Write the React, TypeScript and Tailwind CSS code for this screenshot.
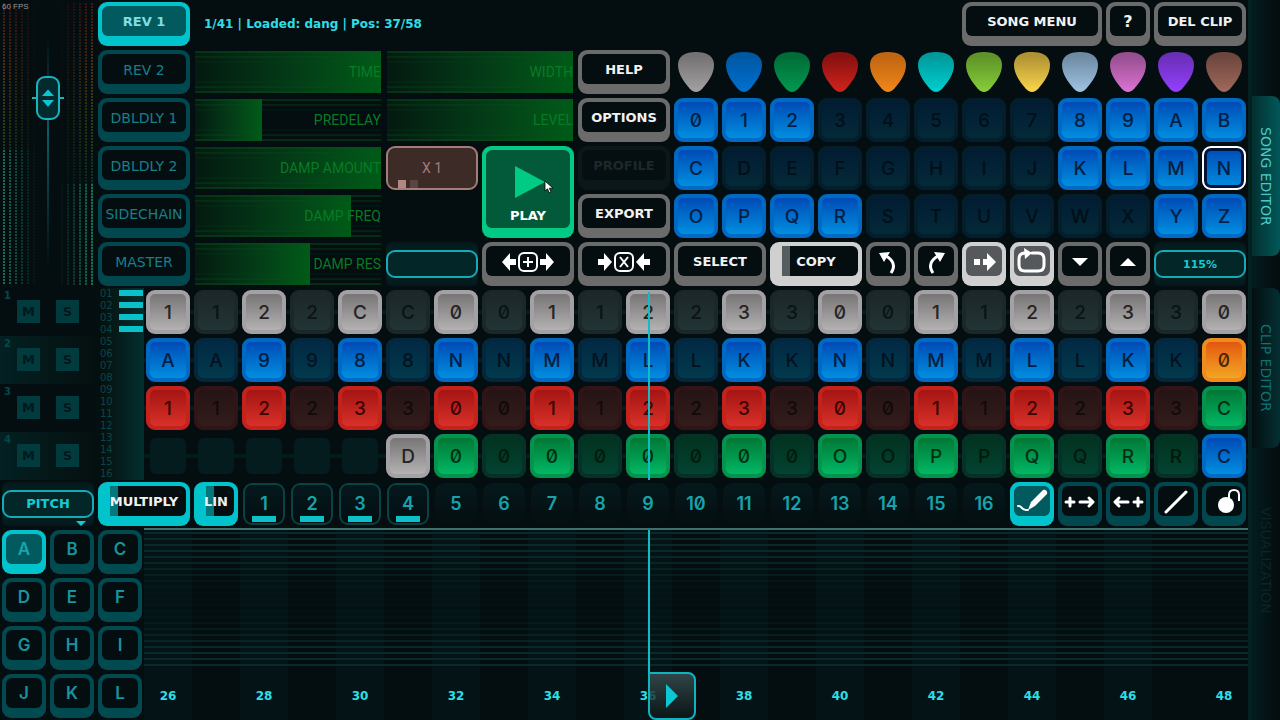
import { useState, type ReactNode } from "react";
import clsx from "clsx";

const GRID = "grid grid-cols-[repeat(26,minmax(0,1fr))] auto-rows-[48px]";

// outer rim + text colour, inner face colour
const KEY_STYLES: Record<string, [string, string]> = {
  teal: ["bg-[#00484d] text-[#167f88]", "bg-[#040e11]"],
  tealLit: ["bg-[#00c3cc] text-[#7fdfe2]", "bg-[#025a5e]"],
  tealOn: ["bg-[#00c3cc] text-[#18a5ae]", "bg-[#025a5e]"],
  pad: ["bg-[#004a50] text-[#18949e]", "bg-[#040e11]"],
  gray: ["bg-[#6b6b6b] text-[#f2f2f2]", "bg-[#040e11]"],
  light: ["bg-[#d0d0d0] text-white", "bg-[#55595b]"],
  off: ["bg-[#0b1719] text-[#1c282a]", "bg-[#050f11]"],
  play: ["bg-[#00ca83] text-white", "bg-[#035a3b]"],
  copy: ["bg-[#d0d0d0] text-[#f2f2f2]", "bg-[linear-gradient(90deg,#d0d0d0_8px,#565d5f_8px,#565d5f_16px,#040e11_16px)]"],
  toggle: ["bg-[#00c3cc] text-[#f2f2f2]", "bg-[linear-gradient(90deg,#00c3cc_8px,#04777d_8px,#04777d_16px,#040e11_16px)]"],
};

const CLIP_STYLES: Record<string, string> = {
  gray: "border-[#a3a1a3] from-[#777576] to-[#b4b2b3] text-[#242424]",
  grayDim: "border-[#1a282a] from-[#1c2829] to-[#233436] text-[#0a1415]",
  blue: "border-[#0069c4] from-[#004bb6] to-[#008ee0] text-[#031f45]",
  blueDim: "border-[#03283e] from-[#022945] to-[#023a4c] text-[#02131f]",
  blueOff: "border-[#031f2e] from-[#021c33] to-[#042a38] text-[#020f19]",
  red: "border-[#c3221d] from-[#a51412] to-[#d93029] text-[#3a0505]",
  redDim: "border-[#301416] from-[#251415] to-[#331c1c] text-[#120909]",
  green: "border-[#04934c] from-[#007835] to-[#00b865] text-[#023017]",
  greenDim: "border-[#053226] from-[#02331f] to-[#034330] text-[#021910]",
  orange: "border-[#f08c1e] from-[#e2560f] to-[#f2a524] text-[#4a2604]",
};

const PICKS = [
  ["#747273", "#a3a1a2"], ["#0058a4", "#0070cf"], ["#006c38", "#029a4f"], ["#86110f", "#d1231d"],
  ["#c06512", "#f0871a"], ["#009a9b", "#00cfd1"], ["#5f9228", "#86cf3a"], ["#b09234", "#fbd74c"],
  ["#6d8aa3", "#a0c4e4"], ["#954f8e", "#de73d5"], ["#6a2fb8", "#9440ff"], ["#6d463d", "#a1695c"],
];

const TRACKS = [
  { color: "gray", notes: "1122CC0011223300112233", last: ["gray", "0"] },
  { color: "blue", notes: "AA9988NNMMLLKKNNMMLLKK", last: ["orange", "0"] },
  { color: "red", notes: "1122330011223300112233", last: ["green", "C"] },
  { color: "green", notes: "     D00000000OOPPQQRR", last: ["blue", "C"] },
];

const BANKS = [
  { keys: "0123456789AB", lit: "01289AB" },
  { keys: "CDEFGHIJKLMN", lit: "CKLMN" },
  { keys: "OPQRSTUVWXYZ", lit: "OPQRYZ" },
];

function Key({ kind, className, label, children }: { kind: string; className?: string; label?: string; children: ReactNode }) {
  const [rim, face] = KEY_STYLES[kind];
  return (
    <button aria-label={label} className={clsx("m-[2px] rounded-[9px] px-1 pt-1 pb-[10px] whitespace-nowrap", rim, className)}>
      <span className={clsx("flex h-full flex-col items-center justify-center rounded-md pt-[2px]", face)}>{children}</span>
    </button>
  );
}

function Clip({ color, children, selected }: { color: string; children: string; selected?: boolean }) {
  return (
    <button
      className={clsx(
        "m-[2px] flex items-center justify-center rounded-[9px] bg-linear-to-b pt-[2px] font-[Inter,sans-serif] text-[19px] font-medium slashed-zero",
        selected ? "border-2 border-white from-[#004bb6] to-[#008ee0] text-[#031f45] shadow-[inset_0_0_0_3px_#021338]" : "border-4",
        !selected && CLIP_STYLES[color],
      )}
    >
      {children}
    </button>
  );
}

function ParamSlider({ name, value }: { name: string; value: number }) {
  const [val, setVal] = useState(value);
  return (
    <label className="relative col-span-4 my-[3px] mr-[3px] ml-[3px] flex items-center justify-end overflow-hidden font-[Roboto,sans-serif] text-sm text-[#087a26]">
      <span
        className="absolute inset-y-0 left-0 bg-linear-to-r from-[#031a10] to-[#005c17]"
        style={{ width: `${val}%` }}
      />
      <span className="absolute inset-0 bg-[repeating-linear-gradient(#06501b_0_2px,transparent_2px_5px)] opacity-50 [mask-image:linear-gradient(black,transparent_35%,transparent_65%,black)]" />
      <span className="relative">{name}</span>
      <input
        type="range"
        value={val}
        onChange={(e) => setVal(Number(e.target.value))}
        className="absolute inset-0 cursor-pointer opacity-0"
      />
    </label>
  );
}

function LevelMeter() {
  const bars = [0, 1, 2, 3, 4, 5];
  return (
    <div className="relative col-span-2 row-span-6">
      <svg viewBox="0 0 96 288" preserveAspectRatio="none" className="size-full">
        <defs>
          <linearGradient id="meter" gradientUnits="userSpaceOnUse" x1="0" y1="0" x2="0" y2="288">
            <stop offset="0" stopColor="#4c1210" />
            <stop offset="0.25" stopColor="#4e3010" />
            <stop offset="0.45" stopColor="#2e3c10" />
            <stop offset="0.62" stopColor="#0b3420" />
            <stop offset="1" stopColor="#08301f" />
          </linearGradient>
          <linearGradient id="fader" x1="0" y1="0" x2="0" y2="1">
            <stop offset="0" stopColor="#0c5960" stopOpacity="0" />
            <stop offset="0.4" stopColor="#0d5d66" />
            <stop offset="1" stopColor="#0c5960" stopOpacity="0" />
          </linearGradient>
        </defs>
        {bars.map((i) => (
          <g key={i} strokeWidth="2" strokeDasharray="2 1" opacity={1 - i * 0.18}>
            <path d={`M${4 + i * 6} 3V285`} stroke="url(#meter)" />
            <path d={`M${92 - i * 6} 3V285`} stroke="url(#meter)" />
            <path d={`M${4 + i * 6} 150V285`} stroke="#186c50" />
            <path d={`M${92 - i * 6} 184V285`} stroke="#186c50" />
          </g>
        ))}
        <rect x="47" y="36" width="2" height="236" fill="url(#fader)" />
        <path d="M32 98h32" stroke="#18b4bf" strokeWidth="2" />
        <rect x="37" y="77" width="22" height="42" rx="8" fill="#032a2e" stroke="#18b4bf" strokeWidth="2" />
        <path d="M48 89.500l6 6.500H42zM48 107l6-7H42z" fill="#0cc4cf" />
      </svg>
      <input type="range" aria-label="Volume" className="absolute inset-0 size-full opacity-0" />
      <span className="absolute top-[1px] left-[2px] font-['Liberation_Sans',sans-serif] text-[8px] text-[#9a9a9a]">60 FPS</span>
    </div>
  );
}

function Pick({ index, colors }: { index: number; colors: string[] }) {
  return (
    <button aria-label={`Color ${index + 1}`} className="flex items-center justify-center">
      <svg width="36" height="40" viewBox="0 0 36 40">
        <linearGradient id={`pick${index}`} x1="0" y1="0" x2="0" y2="1">
          <stop offset="0.1" stopColor={colors[0]} />
          <stop offset="1" stopColor={colors[1]} />
        </linearGradient>
        <path
          d="M18 0C29 0 36 4 36 13c0 9-6 17-12 24-4 4-8 4-12 0C6 30 0 22 0 13 0 4 7 0 18 0z"
          fill={`url(#pick${index})`}
        />
      </svg>
    </button>
  );
}

function Icon({ w = 32, fill, children }: { w?: number; fill?: boolean; children: ReactNode }) {
  return (
    <svg
      width={w}
      height="28"
      viewBox={`0 0 ${w} 28`}
      fill={fill ? "white" : "none"}
      stroke={fill ? "none" : "white"}
      strokeWidth="3"
      strokeLinecap="round"
      strokeLinejoin="round"
    >
      {children}
    </svg>
  );
}

const LABEL = "text-[13px] font-bold";
const FIELD = "h-7 w-full min-w-0 appearance-none rounded-[9px] border-2 border-[#18aab4] bg-[#032629] text-center font-bold text-[#12ccd4]";
const FIELD_WRAP = "relative col-span-2 m-[2px] flex items-center rounded-md bg-[linear-gradient(#04181a,#04282b_50%,#04181a)]";

function TopSection() {
  return (
    <section className={GRID}>
      <LevelMeter />
      <Key kind="tealLit" className={clsx("col-span-2", LABEL)}>REV 1</Key>
      <p className="col-[span_16] flex items-center pl-3 text-xs font-bold text-[#2cdfe6]">1/41 | Loaded: dang | Pos: 37/58</p>
      <Key kind="gray" className={clsx("col-span-3", LABEL)}>SONG MENU</Key>
      <Key kind="gray" className="text-base font-bold">?</Key>
      <Key kind="gray" className={clsx("col-span-2", LABEL)}>DEL CLIP</Key>

      <Key kind="teal" className="col-span-2 text-sm">REV 2</Key>
      <ParamSlider name="TIME" value={100} />
      <ParamSlider name="WIDTH" value={100} />
      <Key kind="gray" className={clsx("col-span-2", LABEL)}>HELP</Key>
      {PICKS.map((colors, i) => <Pick key={i} index={i} colors={colors} />)}

      <Key kind="teal" className="col-span-2 text-sm">DBLDLY 1</Key>
      <ParamSlider name="PREDELAY" value={36} />
      <ParamSlider name="LEVEL" value={100} />
      <Key kind="gray" className={clsx("col-span-2", LABEL)}>OPTIONS</Key>
      <ClipBank bank={BANKS[0]} />

      <Key kind="teal" className="col-span-2 text-sm">DBLDLY 2</Key>
      <ParamSlider name="DAMP AMOUNT" value={100} />
      <button className="relative col-span-2 m-[2px] rounded-[9px] border-2 border-[#a37d76] bg-[#3d2b27] font-[Roboto,sans-serif] text-sm text-[#a37d76]">
        X 1
        <span className="absolute bottom-0 left-[10px] size-2 bg-[#b08a82]" />
        <span className="absolute bottom-0 left-[22px] size-2 bg-[#5a4540]" />
      </button>
      <Key kind="play" className={clsx("relative col-span-2 row-span-2", LABEL)}>
        <svg width="30" height="32" viewBox="0 0 30 32" fill="#00ca83" className="mt-3 mb-2 ml-1"><path d="M0 0l30 16L0 32z" /></svg>
        PLAY
        <svg width="10" height="14" viewBox="0 0 10 14" className="absolute top-[34px] left-[62px]">
          <path d="M1 1v10l2.500-2.200 1.700 4 1.800-.8-1.700-3.800H9z" fill="white" stroke="black" strokeWidth="0.800" />
        </svg>
      </Key>
      <Key kind="off" className={clsx("col-span-2", LABEL)}>PROFILE</Key>
      <ClipBank bank={BANKS[1]} />

      <Key kind="teal" className="col-span-2 text-sm">SIDECHAIN</Key>
      <ParamSlider name="DAMP FREQ" value={84} />
      <div className="col-span-2" />
      <Key kind="gray" className={clsx("col-span-2", LABEL)}>EXPORT</Key>
      <ClipBank bank={BANKS[2]} />

      <Key kind="teal" className="col-span-2 text-sm">MASTER</Key>
      <ParamSlider name="DAMP RES" value={62} />
      <div className={FIELD_WRAP}>
        <input aria-label="Clip name" className={FIELD} />
      </div>
      <Key kind="gray" label="Insert" className="col-span-2">
        <Icon w={54}>
          <path d="M1 14l8-9v6h6v6H9v6zM53 14l-8-9v6h-6v6h6v6z" fill="white" stroke="none" />
          <rect x="18" y="5" width="18" height="18" rx="5" strokeWidth="2" />
          <path d="M22 14h10M27 9v10" strokeLinecap="butt" strokeWidth="2" />
        </Icon>
      </Key>
      <Key kind="gray" label="Remove" className="col-span-2">
        <Icon w={54}>
          <path d="M15 14L7 5v6H1v6h6v6zM39 14l8-9v6h6v6h-6v6z" fill="white" stroke="none" />
          <rect x="18" y="5" width="18" height="18" rx="5" strokeWidth="2" />
          <path d="M23 9l8 10M31 9l-8 10" strokeLinecap="butt" strokeWidth="2" />
        </Icon>
      </Key>
      <Key kind="gray" className={clsx("col-span-2", LABEL)}>SELECT</Key>
      <Key kind="copy" className={clsx("col-span-2", LABEL)}>COPY</Key>
      <Key kind="gray" label="Undo">
        <Icon>
          <path d="M19 25c5-7 2-13-5-17" strokeLinecap="butt" />
          <path d="M7 5l11-1-6 10z" fill="white" stroke="none" />
        </Icon>
      </Key>
      <Key kind="gray" label="Redo">
        <Icon>
          <path d="M13 25c-5-7-2-13 5-17" strokeLinecap="butt" />
          <path d="M25 5L14 4l6 10z" fill="white" stroke="none" />
        </Icon>
      </Key>
      <Key kind="light" label="Step">
        <Icon fill><path d="M6 11h6v6H6zM15 11h4V5l9 9-9 9v-6h-4z" /></Icon>
      </Key>
      <Key kind="light" label="Loop">
        <Icon>
          <path d="M16 5h6c4 0 6 2 6 6v6c0 4-2 6-6 6H9c-4 0-6-2-6-6v-6c0-4 2-6 6-6" strokeWidth="3" />
          <path d="M8 0l8 5-7 6z" fill="white" stroke="none" />
        </Icon>
      </Key>
      <Key kind="gray" label="Down"><Icon fill><path d="M8 10h16l-8 8z" /></Icon></Key>
      <Key kind="gray" label="Up"><Icon fill><path d="M8 18h16l-8-8z" /></Icon></Key>
      <div className={FIELD_WRAP}>
        <input aria-label="Zoom" defaultValue="115%" className={clsx(FIELD, "text-[11px]")} />
      </div>
    </section>
  );
}

function ClipBank({ bank }: { bank: { keys: string; lit: string } }) {
  return (
    <>
      {bank.keys.split("").map((k) => (
        <Clip key={k} color={bank.lit.includes(k) ? "blue" : "blueOff"} selected={k === "N"}>{k}</Clip>
      ))}
    </>
  );
}

function Mixer() {
  return (
    <div className="col-span-2">
      {[1, 2, 3, 4].map((n) => (
        <div key={n} className={clsx("flex h-12 items-start pl-1", n % 2 === 0 && "bg-linear-to-r from-[#032022] to-[#04100f]")}>
          <span className="w-[13px] pt-[2px] text-[10px] leading-3 font-bold text-[#06474b]">{n}</span>
          <button aria-label={`Mute track ${n}`} className="mt-3 size-[23px] bg-[#023b3e] text-[13px] font-bold text-[#01191c]">M</button>
          <button aria-label={`Solo track ${n}`} className="mt-3 ml-4 size-[23px] bg-[#023b3e] text-[13px] font-bold text-[#01191c]">S</button>
        </div>
      ))}
    </div>
  );
}

function StepTicks() {
  return (
    <div className="bg-linear-to-r from-[#04100f] from-10% to-[#02302f]">
      {Array.from({ length: 16 }, (_, i) => (
        <div key={i} className="flex h-3 items-center gap-[3px] pl-1">
          <span className="w-4 text-[10px] leading-3 text-[#0a4549]">{String(i + 1).padStart(2, "0")}</span>
          {i < 4 && <span className="mb-[2px] h-[6px] w-6 bg-[#0cc0ca]" />}
        </div>
      ))}
    </div>
  );
}

function Arranger() {
  return (
    <div className="relative col-[span_23]">
      {TRACKS.map((track) => (
        <div
          key={track.color}
          className="grid h-12 grid-cols-[repeat(23,minmax(0,1fr))] bg-[linear-gradient(#061b1d,#061b1d)] bg-[length:100%_4px] bg-center bg-no-repeat"
        >
          {track.notes.split("").map((note, i) => {
            if (note === " ") return <button key={i} aria-label="Empty slot" className="m-[6px] rounded-md bg-[#041c1e]" />;
            if (note === "D") return <Clip key={i} color="gray">D</Clip>;
            return <Clip key={i} color={i % 2 === 0 ? track.color : `${track.color}Dim`}>{note}</Clip>;
          })}
          <Clip color={track.last[0]}>{track.last[1]}</Clip>
        </div>
      ))}
      <div className="absolute top-1 bottom-0 left-[45.65%] w-[2px] bg-[#10bcc6]" />
    </div>
  );
}

function ToolRow() {
  return (
    <section className={GRID}>
      <label className={FIELD_WRAP}>
        <select aria-label="Parameter" className={clsx(FIELD, "text-[13px]")}>
          <option>PITCH</option>
        </select>
        <svg width="10" height="5" viewBox="0 0 10 5" className="absolute right-2 bottom-0" fill="#12ccd4"><path d="M0 0h10L5 5z" /></svg>
      </label>
      <Key kind="toggle" className={clsx("col-span-2", LABEL)}>MULTIPLY</Key>
      <Key kind="toggle" className={LABEL}>LIN</Key>
      {Array.from({ length: 16 }, (_, i) => (
        <button
          key={i}
          className={clsx(
            "m-[3px] flex flex-col items-center rounded-[9px] bg-linear-to-b from-[#04191c] to-[#040e11] font-[Inter,sans-serif] text-lg leading-6 font-semibold text-[#17a3ad] slashed-zero",
            i < 4 ? "border-2 border-[#0a4144] pt-[7px]" : "pt-[9px]",
          )}
        >
          {i + 1}
          {i < 4 && <span className="h-[6px] w-6 bg-[#0cc0ca]" />}
        </button>
      ))}
      <Key kind="tealOn" label="Draw">
        <Icon>
          <path d="M2 18c4-1 3 4 8 4h2" strokeWidth="2" />
          <path d="M12 22l3-8L27 2c2-1 5 1 4 4L19 18z" fill="white" stroke="none" />
        </Icon>
      </Key>
      <Key kind="teal" label="Expand"><Icon><path d="M2 14h8M6 10v8M16 14h13M25 10l4 4-4 4" /></Icon></Key>
      <Key kind="teal" label="Contract"><Icon><path d="M30 14h-8M26 10v8M16 14H3M7 10l-4 4 4 4" /></Icon></Key>
      <Key kind="teal" label="Line"><Icon><path d="M6 24L26 4" /></Icon></Key>
      <Key kind="teal" label="Unlock">
        <Icon>
          <circle cx="18" cy="17" r="8" fill="white" stroke="none" />
          <path d="M21 10V7c0-3 2-5 5-5s5 2 5 5v6" strokeWidth="2" strokeLinecap="butt" />
        </Icon>
      </Key>
    </section>
  );
}

function Graph() {
  return (
    <div className="relative col-[span_23] row-span-4 border-t-2 border-[#3c716f]">
      <div className="grid h-full grid-cols-[repeat(23,minmax(0,1fr))]">
        {Array.from({ length: 23 }, (_, i) => (
          <div
            key={i}
            className={clsx(
              "flex items-end justify-center pb-[14px] text-xs leading-5 font-bold text-[#2cdfe6]",
              i % 2 === 0 && i < 22 && "bg-[#041316]",
            )}
          >
            {i % 2 === 0 && 26 + i}
          </div>
        ))}
      </div>
      <div className="absolute inset-x-0 top-[2px] bottom-[50px] bg-[repeating-linear-gradient(#0a292b_0_2px,transparent_2px_6px)] [mask-image:linear-gradient(black_15%,rgb(0_0_0/0.15)_42%,rgb(0_0_0/0.15)_60%,black_85%)]" />
      <div className="absolute top-0 bottom-12 left-[45.65%] w-[2px] bg-[#10bcc6]" />
      <button
        aria-label="Play from here"
        className="absolute bottom-0 left-[45.65%] flex size-12 items-center justify-center rounded-lg rounded-tl-none border-2 border-[#10b4be] bg-linear-to-b from-[#2f4547] to-[#101a1b]/60"
      >
        <svg width="12" height="24" viewBox="0 0 12 24" fill="#0cc8d2"><path d="M0 0l12 12L0 24z" /></svg>
      </button>
    </div>
  );
}

function SideTabs() {
  const tab = "flex h-40 w-7 items-center justify-center rounded-r-lg text-sm [writing-mode:vertical-rl]";
  return (
    <nav className="flex w-8 shrink-0 flex-col items-end gap-8 border-l-4 border-[#04211f] bg-linear-to-r from-[#031c1e] to-[#040c0e] pt-24">
      <button className={clsx(tab, "bg-linear-to-r from-[#02302f] to-[#02585a] text-[#4cc9cb]")}>SONG EDITOR</button>
      <button className={clsx(tab, "bg-linear-to-r from-[#030f11] to-[#043033] text-[#107075]")}>CLIP EDITOR</button>
      <button className={clsx(tab, "text-[#0b2426]")}>VISUALIZATION</button>
    </nav>
  );
}

export default function App() {
  return (
    <div className="flex min-h-screen bg-[#040d0f] font-['DejaVu_Sans',sans-serif]">
      <main className="min-w-0 flex-1">
        <TopSection />
        <section className="grid grid-cols-[repeat(26,minmax(0,1fr))]">
          <Mixer />
          <StepTicks />
          <Arranger />
        </section>
        <ToolRow />
        <section className="grid grid-cols-[repeat(26,minmax(0,1fr))]">
          <div className="col-span-3 grid auto-rows-[48px] grid-cols-3">
            {"ABCDEFGHIJKL".split("").map((k) => (
              <Key key={k} kind={k === "A" ? "tealOn" : "pad"} className="font-[Inter,sans-serif] text-[17px] font-semibold">{k}</Key>
            ))}
          </div>
          <Graph />
        </section>
      </main>
      <SideTabs />
    </div>
  );
}
